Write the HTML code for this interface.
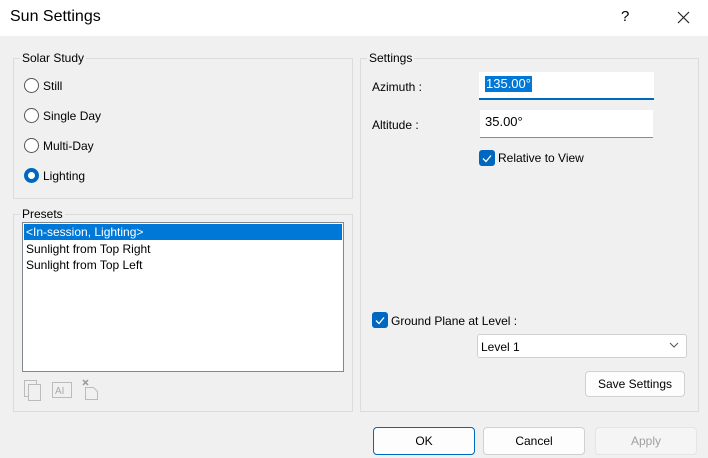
<!DOCTYPE html>
<html><head><style>
*{box-sizing:border-box;margin:0;padding:0}
body{width:708px;height:458px;background:#f0f0f0;font-family:"Liberation Sans",sans-serif;font-size:12px;color:#000;position:relative;overflow:hidden}
.a{position:absolute}
.title{left:0;top:0;width:708px;height:36px;background:#fff}
.grp{border:1px solid #dcdcdc}
.lg{background:#f0f0f0;padding:0 2px;font-size:12px;line-height:14px}
.rad{width:15px;height:15px;border:1px solid #555;border-radius:50%;background:#fff}
.rad.on{border:4px solid #0067c0;}
.cb{width:16px;height:16px;background:#0067c0;border-radius:3px}
.inp{background:#fff;border-bottom:1px solid #8a8a8a}
.btn{background:#fdfdfd;border:1px solid #d0d0d0;border-radius:4px;text-align:center}
</style></head><body>
<div class="a title"></div>
<div class="a" style="left:10px;top:8px;font-size:16px">Sun Settings</div>
<div class="a" style="left:621px;top:8px;font-size:15px">?</div>
<svg class="a" style="left:677px;top:11px" width="13" height="13"><path d="M1 1L12 12M12 1L1 12" stroke="#222" stroke-width="1.2"/></svg>

<div class="a grp" style="left:13px;top:58px;width:340px;height:141px"></div>
<div class="a lg" style="left:20px;top:51px">Solar Study</div>
<div class="a rad" style="left:24px;top:78px"></div><div class="a" style="left:43px;top:79px">Still</div>
<div class="a rad" style="left:24px;top:108px"></div><div class="a" style="left:43px;top:109px">Single Day</div>
<div class="a rad" style="left:24px;top:138px"></div><div class="a" style="left:43px;top:139px">Multi-Day</div>
<div class="a rad on" style="left:24px;top:168px"></div><div class="a" style="left:43px;top:169px">Lighting</div>

<div class="a grp" style="left:13px;top:214px;width:340px;height:198px"></div>
<div class="a lg" style="left:20px;top:207px">Presets</div>
<div class="a" style="left:22px;top:222px;width:322px;height:150px;background:#fff;border:1px solid #828790"></div>
<div class="a" style="left:24px;top:224px;width:318px;height:16px;background:#0078d7;color:#fff;padding-left:2px;line-height:16px">&lt;In-session, Lighting&gt;</div>
<div class="a" style="left:26px;top:241px;line-height:16px">Sunlight from Top Right<br>Sunlight from Top Left</div>
<svg class="a" style="left:23px;top:379px" width="80" height="24" fill="none" stroke="#bbb">
<rect x="1.5" y="1.5" width="12" height="16"/><rect x="5.5" y="5.5" width="12" height="16" fill="#f0f0f0"/>
<rect x="29.5" y="3.5" width="19" height="15"/><text x="32" y="15" font-size="10" fill="#aaa" stroke="none" font-family="Liberation Sans">AI</text>
<path d="M60 1l5 5M65 1l-5 5" stroke="#999" stroke-width="1.5"/><path d="M62.5 8.5h8l4 4v8h-12z"/>
</svg>

<div class="a grp" style="left:360px;top:58px;width:339px;height:354px"></div>
<div class="a lg" style="left:367px;top:51px">Settings</div>
<div class="a" style="left:372px;top:80px">Azimuth :</div>
<div class="a inp" style="left:479px;top:72px;width:175px;height:28px;border-bottom:2px solid #0067c0"></div>
<div class="a" style="left:485px;top:76px;background:#0078d7;color:#fff;line-height:16px;padding:0 1px;font-size:13px">135.00°</div>
<div class="a" style="left:372px;top:118px">Altitude :</div>
<div class="a inp" style="left:480px;top:110px;width:173px;height:28px"></div>
<div class="a" style="left:485px;top:114px;font-size:13px">35.00°</div>
<div class="a cb" style="left:479px;top:150px"></div>
<svg class="a" style="left:479px;top:150px" width="16" height="16"><path d="M4 8.5l3 3 5-6" stroke="#fff" stroke-width="1.3" fill="none"/></svg>
<div class="a" style="left:498px;top:151px">Relative to View</div>
<div class="a cb" style="left:372px;top:312px"></div>
<svg class="a" style="left:372px;top:312px" width="16" height="16"><path d="M4 8.5l3 3 5-6" stroke="#fff" stroke-width="1.3" fill="none"/></svg>
<div class="a" style="left:391px;top:314px">Ground Plane at Level :</div>
<div class="a btn" style="left:477px;top:334px;width:210px;height:24px;border-radius:3px;background:#fff"></div>
<div class="a" style="left:481px;top:340px">Level 1</div>
<svg class="a" style="left:669px;top:342px" width="10" height="7"><path d="M1 1l4 4 4-4" stroke="#555" fill="none"/></svg>
<div class="a btn" style="left:585px;top:371px;width:100px;height:26px;line-height:24px">Save Settings</div>

<div class="a btn" style="left:373px;top:427px;width:102px;height:28px;line-height:26px;border-color:#0067c0">OK</div>
<div class="a btn" style="left:483px;top:427px;width:102px;height:28px;line-height:26px">Cancel</div>
<div class="a btn" style="left:595px;top:427px;width:102px;height:28px;line-height:26px;color:#a0a0a0;background:#f5f5f5;border-color:#e5e5e5">Apply</div>
</body></html>
